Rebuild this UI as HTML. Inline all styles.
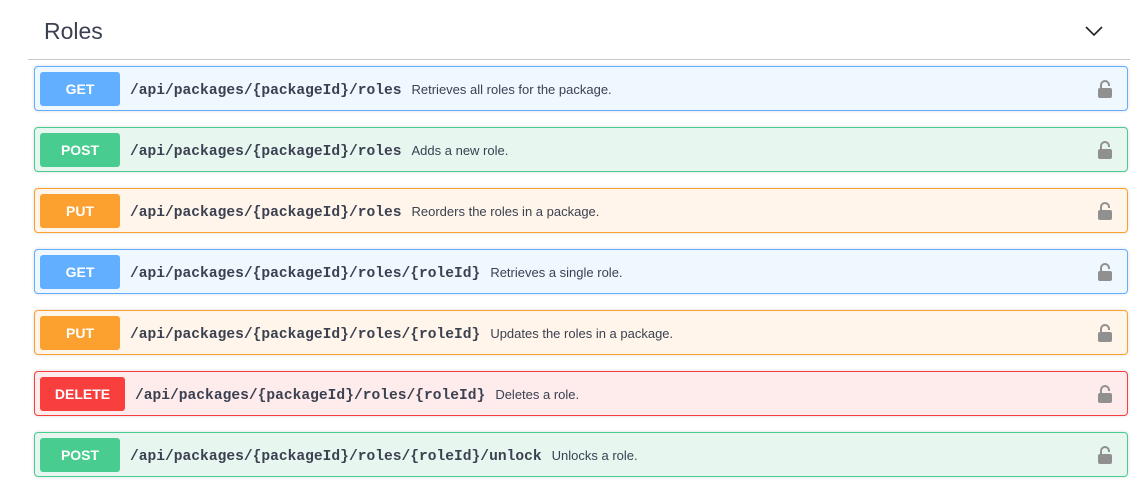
<!DOCTYPE html>
<html><head><meta charset="utf-8"><style>
body{margin:0;width:1146px;height:494px;background:#fff;font-family:"Liberation Sans",sans-serif;overflow:hidden;position:relative}
.h{position:absolute;left:44px;top:18px;font-size:23px;color:#3b4151}
.line{position:absolute;left:28px;top:59px;width:1102px;height:1px;background:#c8c8c8}
.chev{position:absolute;left:1084px;top:24px}
.op{position:absolute;left:34px;width:1094px;height:45px;border:1px solid;border-radius:4px;box-sizing:border-box;box-shadow:0 0 3px rgba(0,0,0,.15)}
.b{position:absolute;left:5px;top:5px;width:80px;height:34px;border-radius:3px;color:#fff;font-weight:bold;font-size:14px;text-align:center;line-height:34px}
.p{position:absolute;left:95px;top:15px;font-family:"Liberation Mono",monospace;font-weight:bold;font-size:14.6px;color:#3b4151;white-space:nowrap}
.d{margin-left:10px;font-family:"Liberation Sans",sans-serif;font-weight:normal;font-size:13px}
.lk{position:absolute;left:1062px;top:12px}
.g{border-color:#61affe;background:#eff7ff}.g .b{background:#61affe}
.po{border-color:#49cc90;background:#e8f6f0}.po .b{background:#49cc90}
.pu{border-color:#fca130;background:#fff5ea}.pu .b{background:#fca130}
.de{border-color:#f93e3e;background:#feebeb}.de .b{background:#f93e3e;width:85px}.de .p{left:100px}
</style></head><body>
<div class="h">Roles</div>
<svg class="chev" width="20" height="14"><path d="M2 3 L10 11 L18 3" stroke="#222" stroke-width="1.6" fill="none"/></svg>
<div class="line"></div>
<div class="op g" style="top:66px"><div class="b">GET</div><div class="p">/api/packages/{packageId}/roles<span class="d">Retrieves all roles for the package.</span></div><svg class="lk" width="16" height="20"><path d="M4 9 V6 a4 4 0 0 1 8 0 V7" stroke="#909090" stroke-width="2" fill="none"/><rect x="1" y="9" width="14" height="10" rx="2" fill="#909090"/></svg></div>
<div class="op po" style="top:127px"><div class="b">POST</div><div class="p">/api/packages/{packageId}/roles<span class="d">Adds a new role.</span></div><svg class="lk" width="16" height="20"><path d="M4 9 V6 a4 4 0 0 1 8 0 V7" stroke="#909090" stroke-width="2" fill="none"/><rect x="1" y="9" width="14" height="10" rx="2" fill="#909090"/></svg></div>
<div class="op pu" style="top:188px"><div class="b">PUT</div><div class="p">/api/packages/{packageId}/roles<span class="d">Reorders the roles in a package.</span></div><svg class="lk" width="16" height="20"><path d="M4 9 V6 a4 4 0 0 1 8 0 V7" stroke="#909090" stroke-width="2" fill="none"/><rect x="1" y="9" width="14" height="10" rx="2" fill="#909090"/></svg></div>
<div class="op g" style="top:249px"><div class="b">GET</div><div class="p">/api/packages/{packageId}/roles/{roleId}<span class="d">Retrieves a single role.</span></div><svg class="lk" width="16" height="20"><path d="M4 9 V6 a4 4 0 0 1 8 0 V7" stroke="#909090" stroke-width="2" fill="none"/><rect x="1" y="9" width="14" height="10" rx="2" fill="#909090"/></svg></div>
<div class="op pu" style="top:310px"><div class="b">PUT</div><div class="p">/api/packages/{packageId}/roles/{roleId}<span class="d">Updates the roles in a package.</span></div><svg class="lk" width="16" height="20"><path d="M4 9 V6 a4 4 0 0 1 8 0 V7" stroke="#909090" stroke-width="2" fill="none"/><rect x="1" y="9" width="14" height="10" rx="2" fill="#909090"/></svg></div>
<div class="op de" style="top:371px"><div class="b">DELETE</div><div class="p">/api/packages/{packageId}/roles/{roleId}<span class="d">Deletes a role.</span></div><svg class="lk" width="16" height="20"><path d="M4 9 V6 a4 4 0 0 1 8 0 V7" stroke="#909090" stroke-width="2" fill="none"/><rect x="1" y="9" width="14" height="10" rx="2" fill="#909090"/></svg></div>
<div class="op po" style="top:432px"><div class="b">POST</div><div class="p">/api/packages/{packageId}/roles/{roleId}/unlock<span class="d">Unlocks a role.</span></div><svg class="lk" width="16" height="20"><path d="M4 9 V6 a4 4 0 0 1 8 0 V7" stroke="#909090" stroke-width="2" fill="none"/><rect x="1" y="9" width="14" height="10" rx="2" fill="#909090"/></svg></div>
</body></html>
